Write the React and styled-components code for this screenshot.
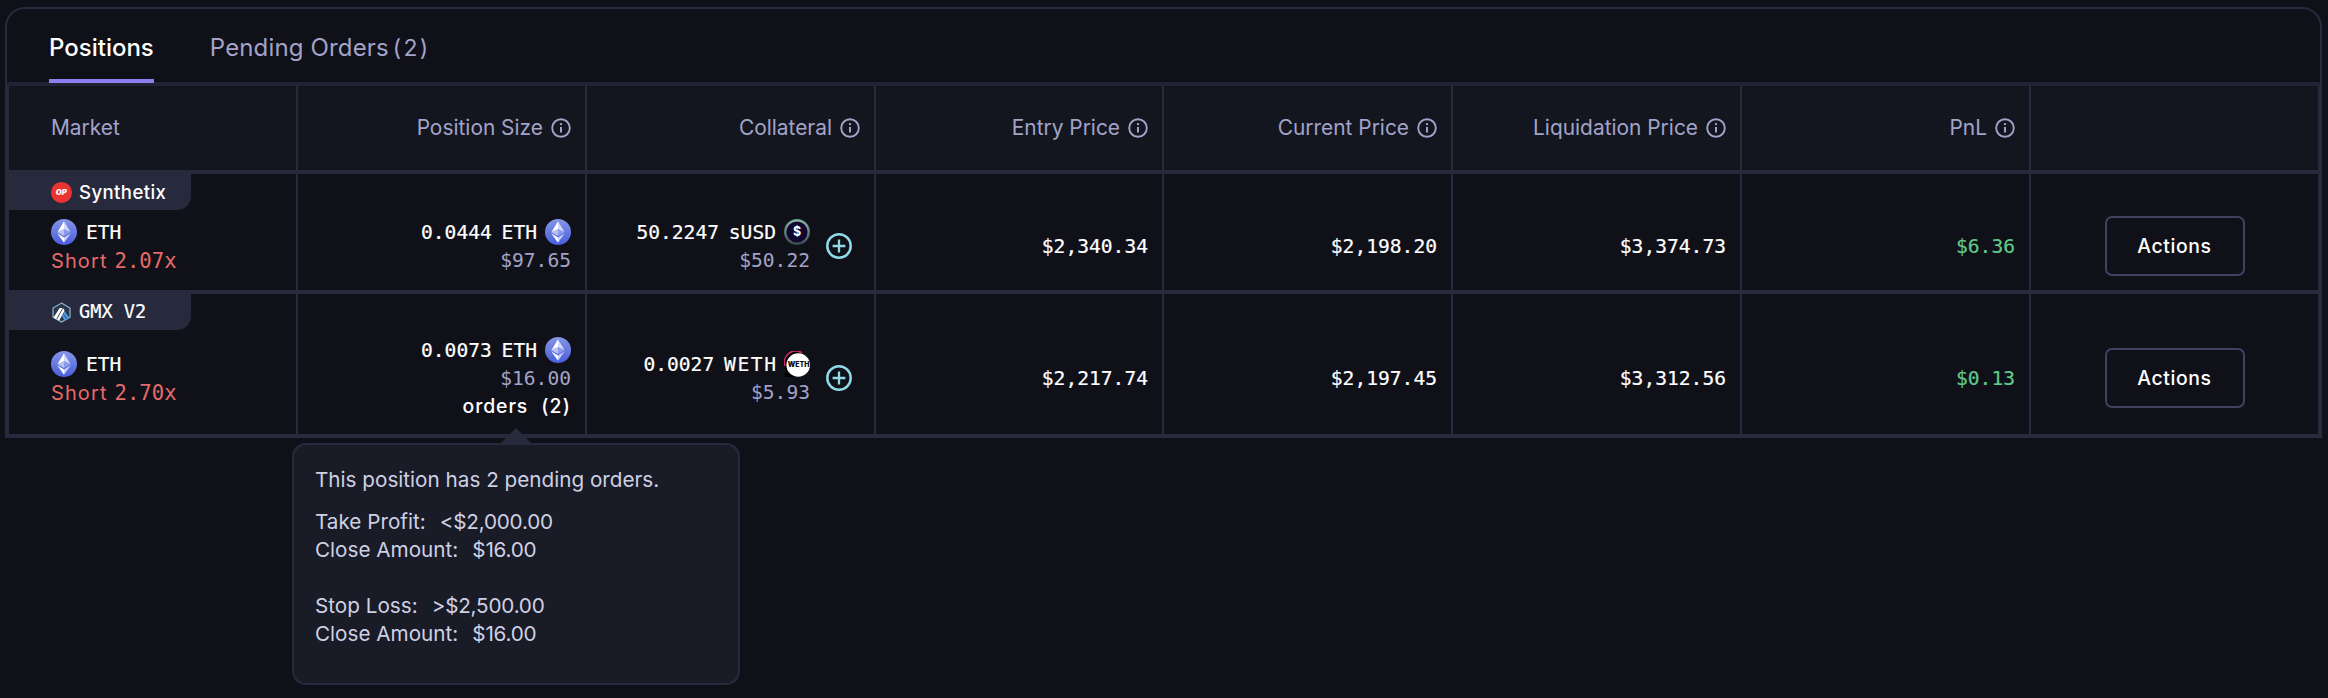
import styled, { createGlobalStyle, css } from "styled-components";
import * as React from "react";

const columns = [
  { label: "Market" },
  { label: "Position Size", info: true },
  { label: "Collateral", info: true },
  { label: "Entry Price", info: true },
  { label: "Current Price", info: true },
  { label: "Liquidation Price", info: true },
  { label: "PnL", info: true },
  { label: "" },
];

const positions = [
  {
    id: "snx-eth",
    protocol: "Synthetix",
    market: "ETH",
    side: "Short",
    leverage: "2.07x",
    size: "0.0444",
    sizeUsd: "$97.65",
    collateral: "50.2247",
    collateralToken: "sUSD",
    collateralUsd: "$50.22",
    entry: "$2,340.34",
    current: "$2,198.20",
    liquidation: "$3,374.73",
    pnl: "$6.36",
    orders: [],
  },
  {
    id: "gmx-eth",
    protocol: "GMX V2",
    market: "ETH",
    side: "Short",
    leverage: "2.70x",
    size: "0.0073",
    sizeUsd: "$16.00",
    collateral: "0.0027",
    collateralToken: "WETH",
    collateralUsd: "$5.93",
    entry: "$2,217.74",
    current: "$2,197.45",
    liquidation: "$3,312.56",
    pnl: "$0.13",
    orders: [
      { type: "Take Profit:", trigger: "<$2,000.00", amount: "$16.00" },
      { type: "Stop Loss:", trigger: ">$2,500.00", amount: "$16.00" },
    ],
  },
];

const InfoIcon = () => (
  <svg width="20" height="20" viewBox="0 0 20 20" fill="none">
    <circle cx="10" cy="10" r="8.8" stroke="#a3a3c9" strokeWidth="1.9" />
    <path d="M10 9v5.6" stroke="#a3a3c9" strokeWidth="2" />
    <circle cx="10" cy="6.1" r="1.2" fill="#a3a3c9" />
  </svg>
);

const EthIcon = () => (
  <svg width="26" height="26" viewBox="0 0 26 26">
    <defs>
      <linearGradient id="ethBg" x1="0" y1="0" x2="0" y2="1">
        <stop offset="0" stopColor="#8496e6" />
        <stop offset="1" stopColor="#4a5edb" />
      </linearGradient>
    </defs>
    <circle cx="13" cy="13" r="13" fill="url(#ethBg)" />
    <path d="M13 2.2 6.4 13.2 13 10.2z" fill="#fff" />
    <path d="M13 2.2 19.6 13.2 13 10.2z" fill="#d3d9f8" />
    <path d="M13 10.2 6.4 13.2 13 17z" fill="#b9c3f3" />
    <path d="M13 10.2 19.6 13.2 13 17z" fill="#8b9aea" />
    <path d="M6.4 14.6 13 18.5V23.8z" fill="#fff" />
    <path d="M19.6 14.6 13 18.5V23.8z" fill="#cbd3f7" />
  </svg>
);

const SusdIcon = () => (
  <svg width="26" height="26" viewBox="0 0 26 26">
    <defs>
      <linearGradient id="susdRing" x1="0" y1="0" x2="0" y2="1">
        <stop offset="0" stopColor="#58b291" />
        <stop offset="1" stopColor="#2b4a46" />
      </linearGradient>
      <linearGradient id="susdInner" x1="0" y1="0" x2="0" y2="1">
        <stop offset="0" stopColor="#b9b6bd" />
        <stop offset="1" stopColor="#4d4a58" />
      </linearGradient>
    </defs>
    <circle cx="13" cy="13" r="13" fill="url(#susdRing)" />
    <circle cx="13" cy="13" r="11.8" fill="url(#susdInner)" />
    <circle cx="13" cy="13" r="10.6" fill="#10072f" />
    <text x="13" y="17.4" textAnchor="middle" fontFamily="Inter, sans-serif" fontSize="12.5" fontWeight="700" fill="#fff">$</text>
  </svg>
);

const WethIcon = () => (
  <svg width="26" height="26" viewBox="0 0 26 26">
    <circle cx="12" cy="12.6" r="12" fill="#000" />
    <path d="M0 22h12v5H2z" fill="#000" />
    <path d="M0.9 15A11.4 11.4 0 0 1 18 1.9" stroke="#c9286b" strokeWidth="1.7" fill="none" />
    <circle cx="14.2" cy="14" r="11.8" fill="#fff" />
    <text x="14.6" y="16.4" textAnchor="middle" fontFamily="Inter, sans-serif" fontSize="6.9" fontWeight="900" fill="#111">WETH</text>
  </svg>
);

const OptimismIcon = () => (
  <svg width="21" height="21" viewBox="0 0 21 21">
    <circle cx="10.5" cy="10.5" r="10.5" fill="#ea3431" />
    <text x="10.3" y="13.2" textAnchor="middle" fontFamily="Inter, sans-serif" fontSize="7.6" fontWeight="900" fontStyle="italic" fill="#fff">OP</text>
  </svg>
);

const ArbitrumIcon = () => (
  <svg width="21" height="21" viewBox="0 0 21 21" fill="none">
    <path d="M10.5 1.1 19 6v9.2l-8.5 4.9L2 15.2V6z" fill="#2b374b" stroke="#92b5d2" strokeWidth="1.2" />
    <path d="M8.7 6h2.8L5.2 17.2 2.5 15.5z" fill="#fff" />
    <path d="M12.2 6.2 13.6 8.8 8.2 18.5 6 17.5z" fill="#fff" />
    <path d="M12.3 11.6 13.6 9.3 18.2 15.7 16.5 17.2z" fill="#4d9ae6" />
    <path d="M10.9 14 12.1 12 15.6 17.5 13.5 18.8z" fill="#4d9ae6" />
  </svg>
);

const PlusIcon = () => (
  <svg width="26" height="26" viewBox="0 0 26 26" fill="none" stroke="#8edbe7">
    <circle cx="13" cy="13" r="11.7" strokeWidth="2.5" />
    <path d="M13 6.6v12.8M6.6 13h12.8" strokeWidth="2.3" />
  </svg>
);

const OrdersTooltip = ({ orders }) => (
  <Tooltip>
    <TooltipTitle>This position has {orders.length} pending orders.</TooltipTitle>
    {orders.map(order => (
      <OrderBlock key={order.type}>
        <OrderLine>{order.type}<OrderValue>{order.trigger}</OrderValue></OrderLine>
        <OrderLine>Close Amount:<OrderValue>{order.amount}</OrderValue></OrderLine>
      </OrderBlock>
    ))}
  </Tooltip>
);

const PositionRow = ({ position }) => (
  <Row>
    <MarketCell>
      <ProtocolTag>
        {position.protocol === "Synthetix" ? <OptimismIcon /> : <ArbitrumIcon />}
        {position.protocol === "Synthetix" ? <Word $size={18.6} $spacing={0.4}>Synthetix</Word> : <TagCode>{position.protocol}</TagCode>}
      </ProtocolTag>
      <MarketInfo>
        <TokenLine $gap={9}>
          <EthIcon />
          <Amount>{position.market}</Amount>
        </TokenLine>
        <SideLine>
          <Word $size={20} $weight={400} $spacing={1.1}>{position.side}</Word>
          <span>{position.leverage}</span>
        </SideLine>
      </MarketInfo>
    </MarketCell>
    <Cell>
      <Stack>
        <TokenLine>
          <Amount>{position.size} {position.market}</Amount>
          <EthIcon />
        </TokenLine>
        <SubValue>{position.sizeUsd}</SubValue>
        {position.orders.length > 0 && (
          <OrdersLink>
            <Word $spacing={0.9}>orders</Word>
            <Word $spacing={1.2}>({position.orders.length})</Word>
            <OrdersTooltip orders={position.orders} />
          </OrdersLink>
        )}
      </Stack>
    </Cell>
    <CollateralCell>
      <Stack>
        <TokenLine>
          <Amount>
            {position.collateral} <Symbol $wide={position.collateralToken === "WETH"}>{position.collateralToken}</Symbol>
          </Amount>
          {position.collateralToken === "sUSD" ? <SusdIcon /> : <WethIcon />}
        </TokenLine>
        <SubValue>{position.collateralUsd}</SubValue>
      </Stack>
      <PlusIcon />
    </CollateralCell>
    <Cell><Amount>{position.entry}</Amount></Cell>
    <Cell><Amount>{position.current}</Amount></Cell>
    <Cell><Amount>{position.liquidation}</Amount></Cell>
    <Cell $profit><Amount>{position.pnl}</Amount></Cell>
    <ActionCell>
      <ActionButton><Word $spacing={0.6}>Actions</Word></ActionButton>
    </ActionCell>
  </Row>
);

const App = () => {
  return (
    <>
      <GlobalStyle />
      <Panel>
        <Tabs>
          <Tab $active>Positions</Tab>
          <Tab>Pending Orders<TabCount>(2)</TabCount></Tab>
        </Tabs>
        <Table>
          <HeaderRow>
            {columns.map((column, i) => (
              <HeaderCell key={i} $left={i === 0}>
                {column.label}
                {column.info && <InfoIcon />}
              </HeaderCell>
            ))}
          </HeaderRow>
          {positions.map(position => (
            <PositionRow key={position.id} position={position} />
          ))}
        </Table>
      </Panel>
    </>
  );
};

export default App;

const GlobalStyle = createGlobalStyle`
  * {
    box-sizing: border-box;
  }
  body {
    margin: 0;
    height: 698px;
    overflow: hidden;
    background: #101018;
    color: #fff;
    font-family: Inter, sans-serif;
  }
  svg {
    display: block;
    flex-shrink: 0;
  }
`;

const Panel = styled.div`
  width: 2317px;
  margin: 7px 0 0 5px;
  border: 2px solid #27293c;
  border-radius: 20px 20px 0 0;
`;

const Tabs = styled.div`
  display: flex;
  gap: 56px;
  height: 77px;
  padding-left: 42px;
  border-bottom: 4px solid #212233;
`;

const Tab = styled.div`
  position: relative;
  display: flex;
  height: 74px;
  padding-top: 23px;
  font-size: 24px;
  font-weight: ${({ $active }) => ($active ? 500 : 400)};
  line-height: 32px;
  letter-spacing: ${({ $active }) => ($active ? 0 : 0.15)}px;
  color: ${({ $active }) => ($active ? "#fff" : "#a3a3c9")};
  border-bottom: 4px solid ${({ $active }) => ($active ? "#8e7ff0" : "transparent")};
`;

const TabCount = styled.span`
  margin-left: 4px;
  font-size: 23px;
  letter-spacing: 2.2px;
`;

const Table = styled.div`
  border: solid #27293c;
  border-width: 0 2px 2px;
`;

const rowGrid = css`
  display: grid;
  grid-template-columns: 289px 289px 289px 288px 289px 289px 289px 287px;
`;

const HeaderRow = styled.div`
  ${rowGrid}
  height: 84px;
  background: #13161e;
`;

const HeaderCell = styled.div`
  display: flex;
  align-items: center;
  justify-content: ${({ $left }) => ($left ? "flex-start" : "flex-end")};
  gap: 8px;
  padding: 0 14px 2px 42px;
  font-size: 20.9px;
  color: #a3a3c9;
  border-right: 2px solid #27293c;
  svg {
    margin-top: 2px;
  }
  &:last-child {
    border-right: none;
  }
`;

const Row = styled.div`
  ${rowGrid}
  border-top: 4px solid #27293c;
  font-family: "DejaVu Sans Mono", monospace;
  font-size: 19.6px;
  line-height: 28px;
  word-spacing: -2px;
  white-space: nowrap;
`;

const Cell = styled.div`
  display: flex;
  align-items: center;
  justify-content: flex-end;
  padding: 36px 14px 8px;
  color: ${({ $profit }) => ($profit ? "#5fc98a" : "#fff")};
  border-right: 2px solid #27293c;
`;

const CollateralCell = styled(Cell)`
  gap: 16px;
  padding-right: 22px;
`;

const ActionCell = styled(Cell)`
  justify-content: center;
  border-right: none;
`;

const MarketCell = styled(Cell)`
  flex-direction: column;
  align-items: flex-start;
  justify-content: flex-start;
  padding: 0 0 8px;
`;

const ProtocolTag = styled.div`
  display: flex;
  align-items: center;
  gap: 7px;
  width: 182px;
  height: 36px;
  padding-left: 42px;
  background: #27293c;
  border-radius: 0 0 14px 0;
`;

const TagCode = styled.span`
  font-size: 18.6px;
  word-spacing: 0;
  -webkit-text-stroke: 0.2px;
`;

const MarketInfo = styled.div`
  display: flex;
  flex: 1;
  flex-direction: column;
  justify-content: center;
  padding-left: 42px;
  min-height: 72px;
`;

const TokenLine = styled.div`
  display: flex;
  align-items: center;
  gap: ${({ $gap }) => $gap || 8}px;
  height: 28px;
`;

const Amount = styled.span`
  padding-top: 2px;
  -webkit-text-stroke: 0.2px;
`;

// WETH is set a little looser than the other symbols
const Symbol = styled.span`
  ${({ $wide }) => $wide && "margin-right: -1.6px; letter-spacing: 1.6px;"}
`;

const SideLine = styled.div`
  display: flex;
  gap: 7px;
  height: 28px;
  font-size: 20.6px;
  line-height: 30px;
  color: #e56b69;
`;

const Word = styled.span`
  font-family: Inter, sans-serif;
  font-size: ${({ $size }) => $size || 19.4}px;
  font-weight: ${({ $weight }) => $weight || 450};
  letter-spacing: ${({ $spacing }) => $spacing}px;
`;

const Stack = styled.div`
  display: flex;
  flex-direction: column;
  align-items: flex-end;
  padding: 6px 0;
`;

const SubValue = styled.div`
  height: 28px;
  line-height: 30px;
  color: #a3a3c9;
`;

const OrdersLink = styled.div`
  position: relative;
  display: flex;
  gap: 13px;
`;

const ActionButton = styled.button`
  width: 140px;
  height: 60px;
  padding: 0;
  color: #fff;
  background: transparent;
  border: 2px solid #404162;
  border-radius: 7px;
`;

const Tooltip = styled.div`
  position: absolute;
  top: 51px;
  right: -169px;
  width: 448px;
  height: 242px;
  padding: 21px 21px 20px;
  font-family: Inter, sans-serif;
  font-size: 20.7px;
  line-height: 28px;
  word-spacing: 0;
  color: #cfd0e4;
  background: #191b27;
  border: 2px solid #27293c;
  border-radius: 14px;
  &::before {
    content: "";
    position: absolute;
    top: -17px;
    left: 207px;
    border: solid transparent;
    border-width: 0 15px 15px;
    border-bottom-color: #27293c;
  }
`;

const TooltipTitle = styled.div`
  margin-bottom: 14px;
`;

const OrderBlock = styled.div`
  margin-bottom: 28px;
`;

const OrderLine = styled.div`
  display: flex;
  gap: 14px;
`;

const OrderValue = styled.span`
  letter-spacing: -0.2px;
`;
